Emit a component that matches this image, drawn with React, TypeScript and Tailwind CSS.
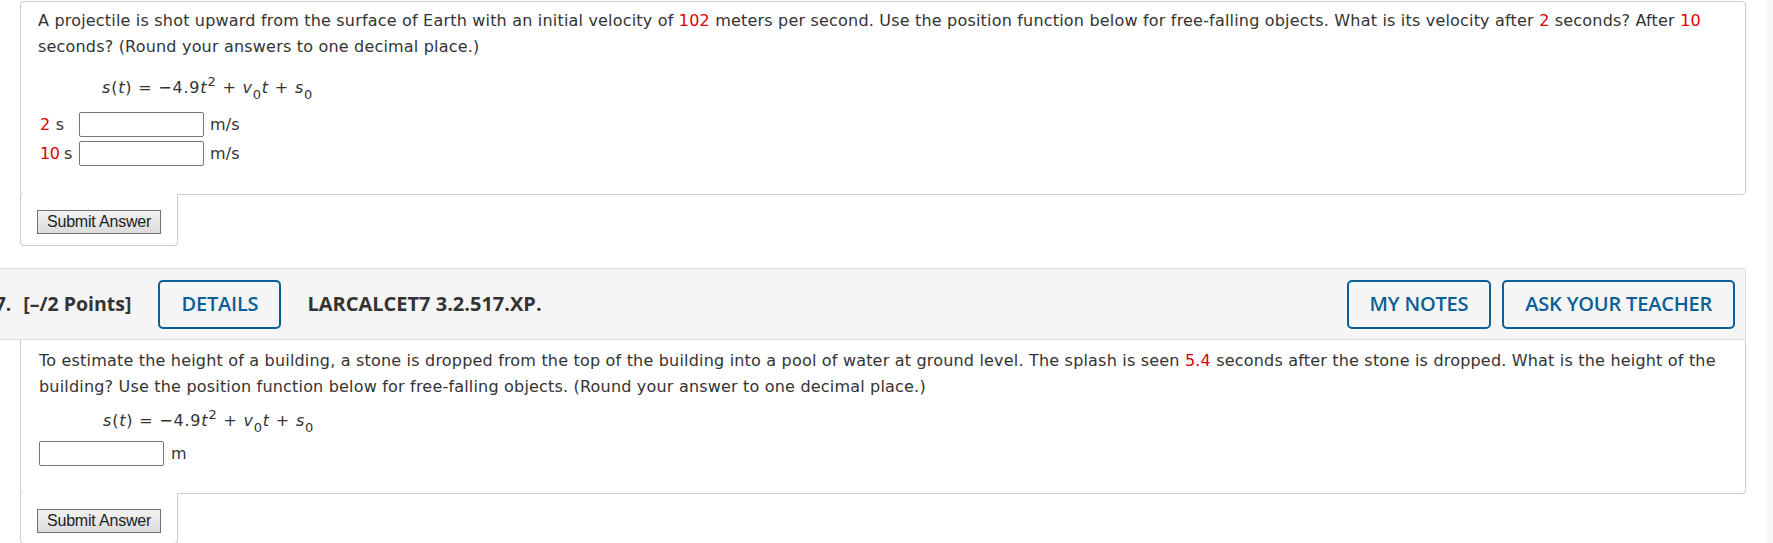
import React from 'react';

const body = "font-['DejaVu_Sans',sans-serif] text-[16px] leading-[26px] tracking-[0.19px] text-[#333]";

function Red({ children }: { children: React.ReactNode }) {
  return <span className="text-[#e00000]">{children}</span>;
}

function Formula() {
  return (
    <div className="ml-[64px] h-[26px] whitespace-nowrap tracking-[0.8px]">
      <i>s</i>(<i>t</i>) = −4.9<i>t</i>
      <sup className="text-[13px] -top-[7px]">2</sup> + <i>v</i>
      <sub className="text-[13px] -bottom-[6px]">0</sub>
      <i>t</i> + <i>s</i>
      <sub className="text-[13px] -bottom-[6px]">0</sub>
    </div>
  );
}

function AnswerBox() {
  return <input type="text" className="w-[125px] h-[25px] border border-[#767676] rounded-[2px] bg-white" />;
}

function SubmitTab({ pt, pb }: { pt: string; pb: string }) {
  return (
    <div className={`relative z-10 -mt-px w-[158px] bg-white border border-t-0 border-[#cccccc] rounded-b-[4px] pl-[16px] ${pt} ${pb}`}>
      <button className="h-[24px] px-[9px] border border-[#707070] bg-gradient-to-b from-[#f2f2f2] to-[#dcdcdc] font-['Liberation_Sans',Arial,sans-serif] text-[16px] leading-[20px] text-[#222] tracking-[-0.2px]">
        Submit Answer
      </button>
    </div>
  );
}

function HeaderButton({ label }: { label: string }) {
  return (
    <button className="h-[49px] px-[21px] border-2 border-[#0b5e96] rounded-[5px] text-[#0b5e96] font-semibold text-[20px] leading-none tracking-[-0.2px]">
      {label}
    </button>
  );
}

export default function App() {
  return (
    <div className="flex w-[1773px] h-[543px] overflow-hidden bg-white">
      <div className="flex-1 overflow-hidden pt-px">
        <div className="w-[1758px] -ml-[12px]">
          {/* question 6 */}
          <div className="ml-[32px]">
            <div className={`border border-[#cccccc] rounded-[4px] pl-[17px] pr-[16px] pt-[6px] pb-[28px] ${body}`}>
              <p>
                A projectile is shot upward from the surface of Earth with an initial velocity of <Red>102</Red> meters per
                second. Use the position function below for free-falling objects. What is its velocity after <Red>2</Red>{' '}
                seconds? After <Red>10</Red> seconds? (Round your answers to one decimal place.)
              </p>
              <div className="mt-[15px]">
                <Formula />
              </div>
              <div className="mt-[11px] flex flex-col gap-[4px]">
                <div className="flex items-center h-[25px]">
                  <span className="w-[41px] pl-[2px]">
                    <Red>2</Red> s
                  </span>
                  <AnswerBox />
                  <span className="ml-[6px]">m/s</span>
                </div>
                <div className="flex items-center h-[25px]">
                  <span className="w-[41px] pl-[2px] whitespace-nowrap tracking-[-0.5px]">
                    <Red>10</Red> s
                  </span>
                  <AnswerBox />
                  <span className="ml-[6px]">m/s</span>
                </div>
              </div>
            </div>
            <SubmitTab pt="pt-[15px]" pb="pb-[11px]" />
          </div>

          {/* question 7 */}
          <div className="mt-[22px] h-[72px] flex items-center bg-[#f5f5f5] border border-[#dddddd] rounded-t-[3px] pr-[10px] font-['Open_Sans',sans-serif] text-[#333]">
            <span className="ml-[6px] font-bold text-[19px]">7.</span>
            <span className="ml-[12px] font-bold text-[19.5px]">[–/2 Points]</span>
            <div className="ml-[27px]">
              <HeaderButton label="DETAILS" />
            </div>
            <span className="ml-[26px] font-bold text-[20px]">LARCALCET7 3.2.517.XP.</span>
            <div className="ml-auto flex gap-[11px]">
              <HeaderButton label="MY NOTES" />
              <HeaderButton label="ASK YOUR TEACHER" />
            </div>
          </div>
          <div className="ml-[32px]">
            <div className={`border border-t-0 border-[#cccccc] rounded-b-[4px] pl-[18px] pr-[16px] pt-[8px] pb-[27px] ${body}`}>
              <p>
                To estimate the height of a building, a stone is dropped from the top of the building into a pool of water at
                ground level. The splash is seen <Red>5.4</Red> seconds after the stone is dropped. What is the height of the
                building? Use the position function below for free-falling objects. (Round your answer to one decimal place.)
              </p>
              <div className="mt-[8px]">
                <Formula />
              </div>
              <div className="mt-[7px] flex items-center h-[25px]">
                <AnswerBox />
                <span className="ml-[7px]">m</span>
              </div>
            </div>
            <SubmitTab pt="pt-[15px]" pb="pb-[10px]" />
          </div>
        </div>
      </div>
      <div className="w-[6px] bg-[#f7f7f7]" />
    </div>
  );
}
